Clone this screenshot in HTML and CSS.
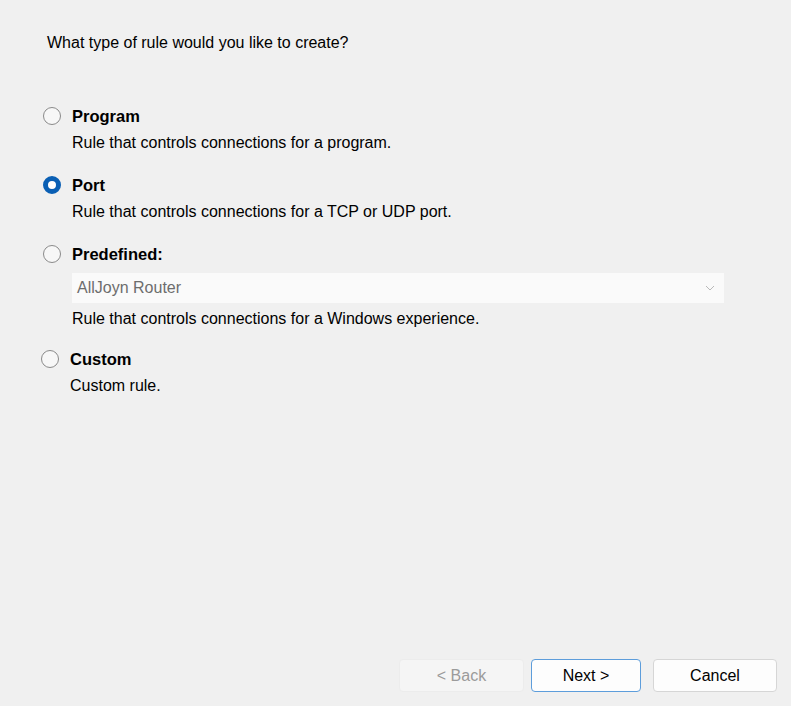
FILE: index.html
```html
<!DOCTYPE html>
<html lang="en">
<head>
<meta charset="utf-8">
<title>New Inbound Rule Wizard</title>
<link rel="stylesheet" href="styles.css">
</head>
<body>
<div class="page">
  <main class="content">
    <p class="question">What type of rule would you like to create?</p>
    <div class="options">
      <div class="option">
        <div class="option-head">
          <span class="radio"></span>
          <span class="option-label">Program</span>
        </div>
        <div class="option-desc">Rule that controls connections for a program.</div>
      </div>
      <div class="option">
        <div class="option-head">
          <span class="radio radio-checked"></span>
          <span class="option-label">Port</span>
        </div>
        <div class="option-desc">Rule that controls connections for a TCP or UDP port.</div>
      </div>
      <div class="option">
        <div class="option-head">
          <span class="radio"></span>
          <span class="option-label">Predefined:</span>
        </div>
        <div class="select">
          <span class="select-text">AllJoyn Router</span>
          <svg class="select-chevron" width="10" height="6" viewBox="0 0 10 6"><path d="M1 1 L5 5 L9 1" fill="none" stroke="#b9b9b9" stroke-width="1"/></svg>
        </div>
        <div class="option-desc">Rule that controls connections for a Windows experience.</div>
      </div>
      <div class="option option-shift">
        <div class="option-head">
          <span class="radio"></span>
          <span class="option-label">Custom</span>
        </div>
        <div class="option-desc">Custom rule.</div>
      </div>
    </div>
  </main>
  <footer class="footer">
    <button class="btn btn-disabled">&lt; Back</button>
    <button class="btn btn-default">Next &gt;</button>
    <button class="btn btn-cancel">Cancel</button>
  </footer>
</div>
</body>
</html>
```
FILE: styles.css
```css
html, body {
  margin: 0;
  padding: 0;
  background: #f0f0f0;
}
body {
  font-family: "Liberation Sans", Arial, sans-serif;
  color: #000;
  font-size: 16px;
}
.page {
  height: 706px;
  display: flex;
  flex-direction: column;
  box-sizing: border-box;
}
.content {
  flex: 1;
  padding-left: 42px;
}
.question {
  margin: 0;
  padding-top: 33px;
  padding-left: 5px;
  line-height: 20px;
}
.options {
  margin-top: 53px;
  display: flex;
  flex-direction: column;
  gap: 22px;
}
.option {
  display: flex;
  flex-direction: column;
  gap: 7px;
}
.option-shift {
  margin-left: -2px;
  margin-top: -2px;
}
.option-head {
  display: flex;
  align-items: center;
  height: 20px;
}
.radio {
  width: 16px;
  height: 16px;
  border: 1.5px solid #8a8a8a;
  border-radius: 50%;
  background: #f7f7f7;
  box-sizing: content-box;
  flex: none;
  margin-left: 1px;
}
.radio-checked {
  width: 8px;
  height: 8px;
  border: 5.5px solid #0a5fb4;
  background: #fff;
}
.option-label {
  margin-left: 11px;
  font-weight: bold;
  font-size: 16.5px;
}
.option-desc {
  padding-left: 30px;
  line-height: 20px;
}
.select {
  margin-left: 30px;
  width: 652px;
  height: 30px;
  background: #fafafa;
  display: flex;
  align-items: center;
  justify-content: space-between;
  padding: 0 9px 0 5px;
  box-sizing: border-box;
  margin-top: 2px;
  margin-bottom: -1px;
}
.select-text {
  color: #6d6d6d;
}
.footer {
  display: flex;
  justify-content: flex-end;
  align-items: center;
  padding: 0 14px 14px 0;
}
.btn {
  height: 33px;
  width: 125px;
  flex: none;
  font-family: "Liberation Sans", Arial, sans-serif;
  font-size: 16px;
  border-radius: 4px;
  border: 1px solid #d6d6d6;
  background: #fdfdfd;
  color: #000;
  padding: 0;
}
.btn-disabled {
  background: #f5f5f5;
  border-color: #ececec;
  color: #9b9b9b;
}
.btn-default {
  width: 110px;
  margin-left: 7px;
  border-color: #5d9ddb;
  background: #fdfdfd;
}
.btn-cancel {
  width: 124px;
  margin-left: 12px;
}
```
